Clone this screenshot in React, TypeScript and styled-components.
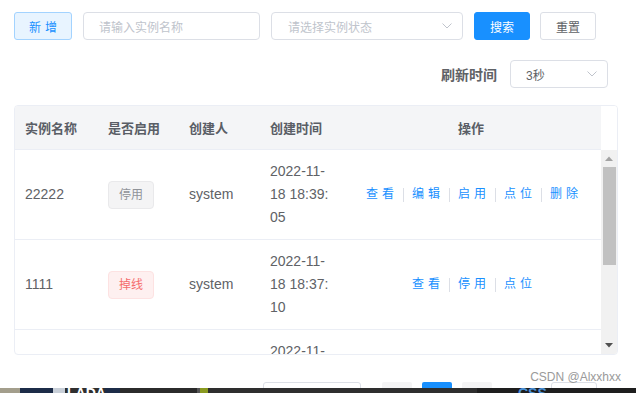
import React from 'react';
import styled, { createGlobalStyle } from 'styled-components';

const Global = createGlobalStyle`
  html, body { margin: 0; padding: 0; background: #fff; }
  body {
    font-family: "Liberation Sans", "Noto Sans CJK SC", sans-serif;
    color: #606266;
  }
  * { box-sizing: border-box; }
`;

const Page = styled.div`
  position: relative;
  width: 636px;
  height: 393px;
  overflow: hidden;
  display: flex;
  flex-direction: column;
`;

const Content = styled.div`
  display: flex;
  flex-direction: column;
  padding: 12px 18px 0 14px;
`;

const Toolbar = styled.div`
  display: flex;
  align-items: center;
  height: 28px;
`;

const Btn = styled.button<{ $variant: 'light' | 'primary' | 'plain'; $w: number; $mr?: number; $ls?: number }>`
  width: ${p => p.$w}px;
  height: 28px;
  margin: 0 ${p => p.$mr ?? 0}px 0 0;
  padding: 0;
  font-family: inherit;
  font-size: 12px;
  letter-spacing: ${p => p.$ls ?? 0}px;
  text-indent: ${p => p.$ls ?? 0}px;
  border-radius: 3px;
  border: 1px solid ${p => (p.$variant === 'light' ? '#a3d3ff' : p.$variant === 'primary' ? '#1890ff' : '#dcdfe6')};
  background: ${p => (p.$variant === 'light' ? '#e8f4ff' : p.$variant === 'primary' ? '#1890ff' : '#fff')};
  color: ${p => (p.$variant === 'light' ? '#1890ff' : p.$variant === 'primary' ? '#fff' : '#606266')};
  cursor: pointer;
`;

const Field = styled.div<{ $w: number; $mr?: number; $pl?: number }>`
  width: ${p => p.$w}px;
  height: 28px;
  margin-right: ${p => p.$mr ?? 0}px;
  border: 1px solid #dcdfe6;
  border-radius: 4px;
  display: flex;
  align-items: center;
  justify-content: space-between;
  padding: 0 10px 0 ${p => p.$pl ?? 15}px;
  font-size: 12px;
  background: #fff;
`;

const Placeholder = styled.span`
  color: #c0c4cc;
`;

const Value = styled.span`
  color: #606266;
`;

const RefreshRow = styled.div`
  display: flex;
  align-items: center;
  justify-content: flex-end;
  height: 28px;
  margin-top: 20px;
  padding-right: 10px;
`;

const RefreshLabel = styled.span`
  font-size: 14px;
  font-weight: 700;
  color: #606266;
  margin-right: 13px;
`;

const Table = styled.div`
  margin-top: 17px;
  width: 604px;
  border: 1px solid #ebeef5;
  border-radius: 4px;
  overflow: hidden;
  display: flex;
  flex-direction: column;
`;

const HeadRow = styled.div`
  display: flex;
  height: 44px;
`;

const HeadCells = styled.div`
  display: flex;
  background: #f4f5f7;
  border-bottom: 1px solid #ebeef5;
`;

const HeadCell = styled.div<{ $w: number; $center?: boolean }>`
  width: ${p => p.$w}px;
  padding: 0 10px;
  display: flex;
  align-items: center;
  justify-content: ${p => (p.$center ? 'center' : 'flex-start')};
  font-size: 13px;
  font-weight: 700;
  color: #5a5e66;
`;

const Gutter = styled.div`
  width: 16px;
  background: #fff;
`;

const Body = styled.div`
  display: flex;
  height: 204px;
`;

const Rows = styled.div`
  width: 586px;
  overflow: hidden;
`;

const Row = styled.div`
  display: flex;
  height: 90px;
  border-bottom: 1px solid #ebeef5;
  flex-shrink: 0;
`;

const Cell = styled.div<{ $w: number; $center?: boolean }>`
  width: ${p => p.$w}px;
  padding: 0 10px;
  display: flex;
  align-items: center;
  justify-content: ${p => (p.$center ? 'center' : 'flex-start')};
  font-size: 14px;
  line-height: 23px;
  word-break: break-all;
  color: #606266;
`;

const Tag = styled.span<{ $type: 'info' | 'danger' }>`
  display: inline-block;
  height: 28px;
  line-height: 26px;
  padding: 0 10px;
  font-size: 12px;
  border-radius: 4px;
  border: 1px solid ${p => (p.$type === 'info' ? '#e9e9eb' : '#fde2e2')};
  background: ${p => (p.$type === 'info' ? '#f4f4f5' : '#fef0f0')};
  color: ${p => (p.$type === 'info' ? '#909399' : '#f56c6c')};
`;

const Ops = styled.div`
  display: flex;
  align-items: center;
  padding-left: 2px;
`;

const OpLink = styled.a`
  display: inline-block;
  font-size: 12px;
  letter-spacing: 4px;
  margin-right: -4px;
  color: #1890ff;
  cursor: pointer;
  line-height: 23px;
`;

const OpSep = styled.span`
  display: inline-block;
  width: 1px;
  height: 14px;
  background: #dcdfe6;
  margin: 0 8px 0 9px;
`;

const ScrollBar = styled.div`
  width: 16px;
  background: #f1f1f1;
  display: flex;
  flex-direction: column;
`;

const ScrollArrow = styled.div`
  height: 17px;
  display: flex;
  align-items: center;
  justify-content: center;
`;

const Thumb = styled.div`
  height: 98px;
  width: 13px;
  margin-left: 2px;
  background: #c1c1c1;
`;

const Spacer = styled.div`
  flex: 1;
`;

const PagerClip = styled.div`
  height: 6px;
  margin-top: 27px;
  overflow: hidden;
  display: flex;
  align-items: flex-start;
  padding-left: 263px;
`;

const PageBox = styled.div<{ $w: number; $ml: number }>`
  width: ${p => p.$w}px;
  height: 28px;
  margin-left: ${p => p.$ml}px;
  border: 1px solid #dcdfe6;
  border-radius: 3px;
  background: #fff;
  flex-shrink: 0;
`;

const PageBtn = styled.div<{ $active?: boolean; $ml: number }>`
  width: 30px;
  height: 28px;
  margin-left: ${p => p.$ml}px;
  border-radius: 2px;
  background: ${p => (p.$active ? '#1890ff' : '#f4f4f5')};
  flex-shrink: 0;
`;

const Taskbar = styled.div`
  margin-top: auto;
  height: 5px;
  display: flex;
  overflow: hidden;
`;

const Seg = styled.div<{ $w: number; $bg: string; $fg?: string }>`
  width: ${p => p.$w}px;
  flex-shrink: 0;
  background: ${p => p.$bg};
  color: ${p => p.$fg ?? '#fff'};
  font-size: 14px;
  font-weight: 700;
  line-height: 14px;
  overflow: hidden;
  white-space: nowrap;
`;

const SegText = styled.span<{ $pl: number }>`
  display: block;
  margin-top: -2px;
  padding-left: ${p => p.$pl}px;
`;

const Watermark = styled.div`
  position: absolute;
  right: 15px;
  top: 370px;
  font-size: 12px;
  color: #9a9a9a;
  font-family: "Liberation Sans", sans-serif;
`;

const Chevron = () => (
  <svg width="10" height="6" viewBox="0 0 10 6" fill="none">
    <path d="M0.5 0.5 L5 5 L9.5 0.5" stroke="#c0c4cc" strokeWidth="1" />
  </svg>
);

const Tri = ({ up, color }: { up?: boolean; color: string }) => (
  <svg width="8" height="5" viewBox="0 0 8 5">
    <path d={up ? 'M0 5 L4 0.5 L8 5 Z' : 'M0 0 L8 0 L4 4.5 Z'} fill={color} />
  </svg>
);

const cols = [83, 81, 81, 81, 260];

type RowData = {
  name: string;
  tag?: { text: string; type: 'info' | 'danger' };
  user: string;
  time: string;
  ops: string[];
};

const data: RowData[] = [
  { name: '22222', tag: { text: '停用', type: 'info' }, user: 'system', time: '2022-11-18 18:39:05', ops: ['查看', '编辑', '启用', '点位', '删除'] },
  { name: '1111', tag: { text: '掉线', type: 'danger' }, user: 'system', time: '2022-11-18 18:37:10', ops: ['查看', '停用', '点位'] },
  { name: '', user: '', time: '2022-11-18 18:35:22', ops: [] },
];

export default function App() {
  return (
    <Page>
      <Global />
      <Content>
        <Toolbar>
          <Btn $variant="light" $w={58} $mr={11} $ls={4}>新增</Btn>
          <Field $w={177} $mr={11}>
            <Placeholder>请输入实例名称</Placeholder>
          </Field>
          <Field $w={192} $mr={11} $pl={16}>
            <Placeholder>请选择实例状态</Placeholder>
            <Chevron />
          </Field>
          <Btn $variant="primary" $w={56} $mr={10}>搜索</Btn>
          <Btn $variant="plain" $w={56}>重置</Btn>
        </Toolbar>
        <RefreshRow>
          <RefreshLabel>刷新时间</RefreshLabel>
          <Field $w={98}>
            <Value>3秒</Value>
            <Chevron />
          </Field>
        </RefreshRow>
        <Table>
          <HeadRow>
            <HeadCells>
              <HeadCell $w={cols[0]}>实例名称</HeadCell>
              <HeadCell $w={cols[1]}>是否启用</HeadCell>
              <HeadCell $w={cols[2]}>创建人</HeadCell>
              <HeadCell $w={cols[3]}>创建时间</HeadCell>
              <HeadCell $w={cols[4]} $center>操作</HeadCell>
            </HeadCells>
            <Gutter />
          </HeadRow>
          <Body>
            <Rows>
              {data.map((r, i) => (
                <Row key={i}>
                  <Cell $w={cols[0]}>{r.name}</Cell>
                  <Cell $w={cols[1]}>
                    {r.tag && <Tag $type={r.tag.type}>{r.tag.text}</Tag>}
                  </Cell>
                  <Cell $w={cols[2]}>{r.user}</Cell>
                  <Cell $w={cols[3]}>{r.time}</Cell>
                  <Cell $w={cols[4]} $center>
                    <Ops>
                      {r.ops.map((op, j) => (
                        <React.Fragment key={op + j}>
                          {j > 0 && <OpSep />}
                          <OpLink>{op}</OpLink>
                        </React.Fragment>
                      ))}
                    </Ops>
                  </Cell>
                </Row>
              ))}
            </Rows>
            <ScrollBar>
              <ScrollArrow>
                <Tri up color="#a3a3a3" />
              </ScrollArrow>
              <Thumb />
              <Spacer />
              <ScrollArrow>
                <Tri color="#505050" />
              </ScrollArrow>
            </ScrollBar>
          </Body>
        </Table>
      </Content>
      <PagerClip>
        <PageBox $w={98} $ml={0} />
        <PageBtn $ml={21} />
        <PageBtn $ml={10} $active />
        <PageBtn $ml={10} />
        <PageBox $w={46} $ml={59} />
      </PagerClip>
      <Taskbar>
        <Seg $w={20} $bg="#a39e8c" />
        <Seg $w={33} $bg="#1c2c48" />
        <Seg $w={12} $bg="#c8cfd8" />
        <Seg $w={40} $bg="#2f2f2f">
          <SegText $pl={2}>LADA</SegText>
        </Seg>
        <Seg $w={15} $bg="#1c2c48" />
        <Seg $w={77} $bg="#2b2b2b" />
        <Seg $w={3} $bg="#555555" />
        <Seg $w={8} $bg="#8a9a20" />
        <Seg $w={269} $bg="#2e2e2e" />
        <Seg $w={159} $bg="#1e1e1e" $fg="#4a90d9">
          <SegText $pl={41}>CSS</SegText>
        </Seg>
      </Taskbar>
      <Watermark>CSDN @Alxxhxx</Watermark>
    </Page>
  );
}
